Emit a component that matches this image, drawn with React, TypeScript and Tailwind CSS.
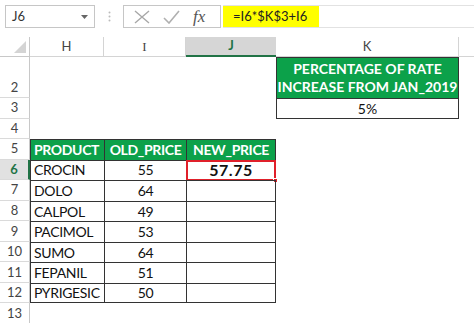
import React from 'react';

const font = { fontFamily: 'Lato, "Open Sans", sans-serif' };

const cols = 'grid-cols-[30px_74px_82px_90px_183px_1fr]';

const products: [string, string][] = [
    ['CROCIN', '55'],
    ['DOLO', '64'],
    ['CALPOL', '49'],
    ['PACIMOL', '53'],
    ['SUMO', '64'],
    ['FEPANIL', '51'],
    ['PYRIGESIC', '50'],
];

const RowHead: React.FC<{ n: number; active?: boolean; end?: boolean }> = ({ n, active, end }) => (
    <div
        className={`flex justify-center border-b border-[#dadada] text-[13px] leading-none ${
            end ? 'items-end pb-[3px]' : 'items-center'
        } ${active ? 'bg-[#e1e1e1] font-bold text-[#217346] border-r-2 border-r-[#217346]' : 'text-[#444] border-r border-r-[#c8c8c8]'}`}
    >
        {n}
    </div>
);

const cell = 'border-l border-t border-[#333] flex items-center text-[14px] tracking-[-0.35px] text-[#111] leading-none';

export default function App() {
    return (
        <div className="w-[474px] h-[323px] bg-white overflow-hidden" style={font}>
            {/* formula bar */}
            <div className="h-[37px] flex items-start pt-[5px] pl-[5px]">
                <div className="w-[90px] h-[23px] border border-[#c6c6c6] flex items-center justify-between pl-[6px] pr-[6px]">
                    <span className="text-[13px] text-[#333]">J6</span>
                    <svg width="7" height="4" viewBox="0 0 7 4">
                        <path d="M0 0h7L3.5 4z" fill="#666" />
                    </svg>
                </div>
                <div className="w-[28px] h-[23px] flex items-center justify-center">
                    <svg width="3" height="11" viewBox="0 0 3 11">
                        <circle cx="1.5" cy="1.5" r="1" fill="#bbb" />
                        <circle cx="1.5" cy="5.5" r="1" fill="#bbb" />
                        <circle cx="1.5" cy="9.5" r="1" fill="#bbb" />
                    </svg>
                </div>
                <div className="w-[98px] h-[23px] border border-[#c6c6c6] flex items-center">
                    <svg className="ml-[10px]" width="16" height="14" viewBox="0 0 16 14">
                        <path d="M1 1l14 12M15 1L1 13" stroke="#a8a8a8" strokeWidth="1.4" fill="none" />
                    </svg>
                    <svg className="ml-[13px]" width="17" height="14" viewBox="0 0 17 14">
                        <path d="M1 8l5 5L16 1" stroke="#b0b0b0" strokeWidth="1.6" fill="none" />
                    </svg>
                    <span
                        className="ml-[13px] text-[17px] italic text-[#555] leading-none"
                        style={{ fontFamily: '"Liberation Serif", serif' }}
                    >
                        fx
                    </span>
                </div>
                <div className="flex-1 h-[23px] ml-[2px] border-y border-[#e2e2e2] flex">
                    <div className="w-[96px] h-full bg-[#ffff00] flex items-center pl-[10px] text-[13px] text-[#222]">
                        =I6*$K$3+I6
                    </div>
                </div>
            </div>

            {/* sheet */}
            <div className={`grid ${cols} grid-rows-[20px_41px_repeat(11,20.55px)]`}>
                {/* column headers */}
                <div className="border-r border-b border-[#c8c8c8] relative">
                    <svg className="absolute right-[3px] bottom-[3px]" width="12" height="12" viewBox="0 0 12 12">
                        <path d="M12 0v12H0z" fill="#d4d4d4" />
                    </svg>
                </div>
                <div className="border-r border-b border-[#d4d4d4] flex items-center justify-center text-[13px] text-[#444]">H</div>
                <div className="border-r border-b border-[#d4d4d4] flex items-center justify-center text-[13px] text-[#444]" style={{ fontFamily: '"Liberation Serif", serif' }}>I</div>
                <div className="bg-[#d6d6d6] border-b-2 border-[#217346] flex items-center justify-center text-[13px] font-bold text-[#217346]">J</div>
                <div className="border-r border-b border-[#d4d4d4] flex items-center justify-center text-[13px] text-[#444]">K</div>
                <div className="border-b border-[#d4d4d4]" />

                {/* row 2 */}
                <RowHead n={2} end />
                <div />
                <div />
                <div />
                <div className="bg-[#0ca14a] border border-b-0 border-[#333] flex flex-col items-center justify-center text-white font-bold text-[14px] leading-[18px]">
                    <span>PERCENTAGE OF RATE</span>
                    <span>INCREASE FROM JAN_2019</span>
                </div>
                <div />

                {/* row 3 */}
                <RowHead n={3} />
                <div />
                <div />
                <div />
                <div className="border border-[#333] flex items-center justify-center text-[14px] text-[#111]">5%</div>
                <div />

                {/* row 4 */}
                <RowHead n={4} />
                <div />
                <div />
                <div />
                <div />
                <div />

                {/* row 5 header */}
                <RowHead n={5} />
                <div className={`${cell} bg-[#0ca14a] text-white font-bold pl-[3px]`}>PRODUCT</div>
                <div className={`${cell} bg-[#0ca14a] text-white font-bold justify-center`}>OLD_PRICE</div>
                <div className={`${cell} bg-[#0ca14a] text-white font-bold justify-center border-r`}>NEW_PRICE</div>
                <div />
                <div />

                {products.map(([p, v], i) => {
                    const last = i === products.length - 1;
                    const b = last ? 'border-b' : '';
                    return (
                        <React.Fragment key={p}>
                            <RowHead n={6 + i} active={i === 0} />
                            <div className={`${cell} ${b} pl-[3px]`}>{p}</div>
                            <div className={`${cell} ${b} justify-center`}>{v}</div>
                            <div className={`${cell} ${b} border-r relative justify-center`}>
                                {i === 0 && (
                                    <>
                                        <div className="absolute -left-[1px] -top-[1px] -right-[1px] -bottom-[1px] border-2 border-[#e0202a]" />
                                        <span className="font-bold text-[16px] tracking-[0.5px]">57.75</span>
                                        <div className="absolute -right-[3px] -bottom-[3px] w-[5px] h-[5px] bg-[#e0202a] border border-white" />
                                    </>
                                )}
                            </div>
                            <div />
                            <div />
                        </React.Fragment>
                    );
                })}

                {/* row 13 */}
                <RowHead n={13} />
                <div />
                <div />
                <div />
                <div />
                <div />
            </div>
        </div>
    );
}
